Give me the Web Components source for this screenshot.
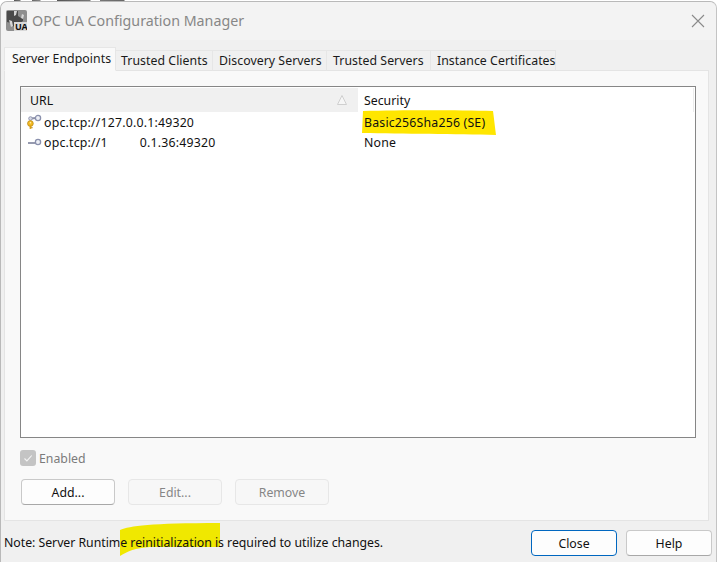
<!DOCTYPE html>
<html><head><meta charset="utf-8"><title>OPC UA Configuration Manager</title>
<style>html,body{margin:0;padding:0;background:#fff}</style></head>
<body>
<template id="t-dialog">
<style>
:host{display:flex;flex-direction:column;width:717px;height:562px;overflow:hidden;position:relative;background:#fff;
font:12.3px "Noto Sans","Open Sans",sans-serif;color:#111}
.scrap{height:1px;flex:none;background:linear-gradient(90deg,#fff 14px,#555 14px,#777 20px,#fff 21px,#fff 32px,#666 32px,#888 40px,#fff 41px,#fff 57px,#555 57px,#777 90px,#fff 91px,#fff 100px,#777 100px,#666 124px,#fff 125px)}
.win{flex:1;display:flex;flex-direction:column;background:#f0f0f0;border:1px solid #b9b9b9;border-bottom:0;border-right-color:#c4c4c4;border-radius:7px 7px 0 0;min-height:0}
.body{flex:1;display:flex;flex-direction:column;padding:7px 7px 0 3px;min-height:0}
.foot{height:41px;display:flex;align-items:center;padding:0 4px 0 3px;flex:none}
.foot .note{flex:1;position:relative;isolation:isolate;margin-top:2px;letter-spacing:-.03px}
.foot .btns{display:flex;gap:9px;margin-top:3px}
</style>
<div class="scrap"></div>
<div class="win">
<slot name="bar"></slot>
<div class="body"><slot name="tabs"></slot><slot name="panel"></slot></div>
<div class="foot"><div class="note"><slot name="note"></slot></div><div class="btns"><slot name="btn"></slot></div></div>
</div>
</template>

<template id="t-bar">
<style>
:host{display:flex;align-items:center;height:38px;flex:none;background:#f3f3f3;border-radius:7px 7px 0 0;padding:0 11px 0 5px;gap:5px;color:#878787;font-size:14.25px}
.t{flex:1;margin-top:-1px}
svg{display:block;flex:none}
</style>
<svg width="21" height="22" viewBox="0 0 21 22">
<rect x="0" y="0" width="21" height="21" rx="2" fill="#8f8f8f"/>
<path d="M1 1h7l1 3 2-3h1v5l3 2 2-2v5l-3 2-2 1-2 3-4-1-1-3-4-1z" fill="#4a4a4a"/>
<path d="M8 1h3l-1 4-2 1zM16 4l2 1-1 4-2-1zM3 10l3 1 1 5-2 1z" fill="#d6d6d6"/>
<rect x="8" y="12" width="13" height="9" fill="#d8d8d8"/>
<text x="9" y="20" font-family="Noto Sans,sans-serif" font-size="9" font-weight="700" fill="#111" letter-spacing="-.3">UA</text>
</svg>
<span class="t"><slot></slot></span>
<svg width="14" height="14" viewBox="0 0 14 14"><path d="M1 1l12 12M13 1L1 13" stroke="#8a8a8a" stroke-width="1.1" fill="none"/></svg>
</template>

<template id="t-tabs">
<style>:host{display:flex;align-items:flex-end;height:24px;flex:none;position:relative;z-index:1;margin-bottom:-1px}</style><slot></slot>
</template>

<template id="t-tab">
<style>
:host{display:flex;align-items:center;box-sizing:border-box;height:21px;padding-left:var(--pad,6px);border:1px solid #e6e6e6;border-left-width:0;border-bottom:1px solid #e4e4e4;background:#f0f0f0;white-space:nowrap;color:#1a1a1a;letter-spacing:.05px}
:host([selected]){height:24px;padding-left:7px;background:#f9f9f9;border-left-width:1px;border-bottom-color:#f9f9f9;padding-bottom:2px}
</style><slot></slot>
</template>

<template id="t-panel">
<style>
:host{display:flex;flex-direction:column;flex:1;box-sizing:border-box;background:#f9f9f9;border:1px solid #e4e4e4;padding:15px 12px 0 15px;min-height:0}
.opts{display:flex;align-items:center;gap:3px;margin-top:10px;height:20px;color:#7b7b7b}
.box{width:16px;height:16px;border-radius:3px;background:#c4c4c4;display:flex;align-items:center;justify-content:center}
.row{display:flex;gap:13px;margin:11px 0 0 1px}
svg{display:block}
</style>
<slot name="list"></slot>
<div class="opts"><span class="box"><svg width="12" height="12" viewBox="0 0 12 12"><path d="M2.5 6.5l2.4 2.4 4.8-5.4" stroke="#f4f4f4" stroke-width="1.1" fill="none"/></svg></span><slot name="check"></slot></div>
<div class="row"><slot name="btn"></slot></div>
</template>

<template id="t-list">
<style>
:host{display:block;box-sizing:border-box;height:352px;background:#fff;border:1px solid #868686;padding-top:1px}
.head{display:grid;grid-template-columns:337px 1fr;height:24px;align-items:center}
.u{background:#f0f0f0;height:100%;display:flex;align-items:center;justify-content:space-between;padding:0 10px 0 9px;box-sizing:border-box}
.s{padding-left:6px;height:100%;display:flex;align-items:center;border-right:1px solid #ececec;margin-right:1px}
svg{display:block;margin-right:1px}
</style>
<div class="head"><div class="u"><span>URL</span><svg width="10" height="10" viewBox="0 0 10 10"><path d="M5 .5L9.5 9.5H.5z" fill="#f6f6f6" stroke="#cfcfcf"/></svg></div><div class="s">Security</div></div>
<slot></slot>
</template>

<template id="t-row">
<style>
:host{display:grid;grid-template-columns:337px 1fr;height:20px;align-items:center;letter-spacing:.2px}
.a{display:flex;align-items:center;padding-left:6px;gap:1px}
.b{padding-left:6px;position:relative;isolation:isolate}
svg{display:block;flex:none}
</style>
<div class="a"><svg width="16" height="16" viewBox="0 0 16 16">
<path id="l" d="M1 9h8" stroke="#8b8fa6" stroke-width="1.8"/>
<circle id="c" cx="11" cy="8" r="2.6" fill="#eef0f6" stroke="#8a90ad" stroke-width="1.3"/>
<g id="k" style="display:none"><circle cx="3.5" cy="4.5" r="1.8" fill="#d7d9e3" stroke="#8a90ad" stroke-width=".9"/><circle cx="3.4" cy="9.5" r="2.9" fill="#f3b921" stroke="#a87a10" stroke-width=".6"/><path d="M2.6 11.5h1.7v3.4H2.6z" fill="#d99e14"/><path d="M4.3 13h1.2v1.2H4.3z" fill="#b9860f"/><circle cx="3.4" cy="8.7" r=".8" fill="#fff1b8"/></g>
</svg><span><slot></slot></span></div>
<div class="b"><slot name="sec"></slot></div>
</template>

<template id="t-btn">
<style>
:host{display:flex;align-items:center;justify-content:center;box-sizing:border-box;width:94px;height:26px;background:#fdfdfd;border:1px solid #c9c9c9;border-bottom-color:#a8a8a8;border-radius:4px;color:#111;padding-top:1px}
:host([disabled]){background:#f7f7f7;border-color:#e7e7e7;color:#868686}
:host([primary]){border:1.5px solid #0067c0;background:#fdfdfd;width:86px}
:host([small]){width:86px}
</style><slot></slot>
</template>

<template id="t-mark">
<style>
:host{position:relative;display:inline-block}
svg{position:absolute;pointer-events:none;z-index:-1}
</style><svg></svg><slot></slot>
</template>

<opc-dialog>
<opc-bar slot="bar">OPC UA Configuration Manager</opc-bar>
<opc-tabs slot="tabs">
<opc-tab selected style="width:112px">Server Endpoints</opc-tab>
<opc-tab style="width:97px;--pad:5px">Trusted Clients</opc-tab>
<opc-tab style="width:114px">Discovery Servers</opc-tab>
<opc-tab style="width:104px">Trusted Servers</opc-tab>
<opc-tab style="width:125px">Instance Certificates</opc-tab>
</opc-tabs>
<opc-panel slot="panel">
<opc-list slot="list">
<opc-row key>opc.tcp://127.0.0.1:49320<opc-mark slot="sec" kind="sec">Basic256Sha256 (SE)</opc-mark></opc-row>
<opc-row>opc.tcp://1<span style="display:inline-block;width:32px"></span>0.1.36:49320<span slot="sec">None</span></opc-row>
</opc-list>
<span slot="check">Enabled</span>
<opc-btn slot="btn">Add...</opc-btn>
<opc-btn slot="btn" disabled>Edit...</opc-btn>
<opc-btn slot="btn" disabled>Remove</opc-btn>
</opc-panel>
<span slot="note">Note: Server Runtime <opc-mark kind="note">reinitialization</opc-mark> is required to utilize changes.</span>
<opc-btn slot="btn" primary>Close</opc-btn>
<opc-btn slot="btn" small>Help</opc-btn>
</opc-dialog>
<script>
function def(name,id,extra){
  customElements.define(name,class extends HTMLElement{
    constructor(){super();this.attachShadow({mode:'open'}).appendChild(document.getElementById(id).content.cloneNode(true));}
    connectedCallback(){if(extra)extra(this);}
  });
}
def('opc-dialog','t-dialog');
def('opc-bar','t-bar');def('opc-tabs','t-tabs');def('opc-tab','t-tab');def('opc-panel','t-panel');def('opc-list','t-list');
def('opc-row','t-row',function(h){
  if(h.hasAttribute('key')){
    var r=h.shadowRoot;r.getElementById('k').style.display='';
    r.getElementById('l').setAttribute('d','M4 4.5L9 4');
    r.getElementById('c').setAttribute('cy','4');
  }
});
def('opc-btn','t-btn');
def('opc-mark','t-mark',function(h){
  var s=h.shadowRoot.querySelector('svg');
  if(h.getAttribute('kind')==='sec'){
    s.setAttribute('width','134');s.setAttribute('height','26');s.setAttribute('viewBox','0 0 134 26');
    s.style.left='-2px';s.style.top='-4px';
    s.innerHTML='<path d="M1 1C40 0 95 0 131 1C132 8 133 18 134 25C95 24 40 24 0 23Z" fill="#ffe600"/>';
  }else{
    s.setAttribute('width','100');s.setAttribute('height','34');s.setAttribute('viewBox','0 0 100 34');
    s.style.left='-10px';s.style.top='-11px';
    s.innerHTML='<path d="M0 7C10 3 30 0 100 0L100 24L30 24C15 25 8 28 0 33Z" fill="#f0e800"/>';
  }
});
</script>
</body></html>
